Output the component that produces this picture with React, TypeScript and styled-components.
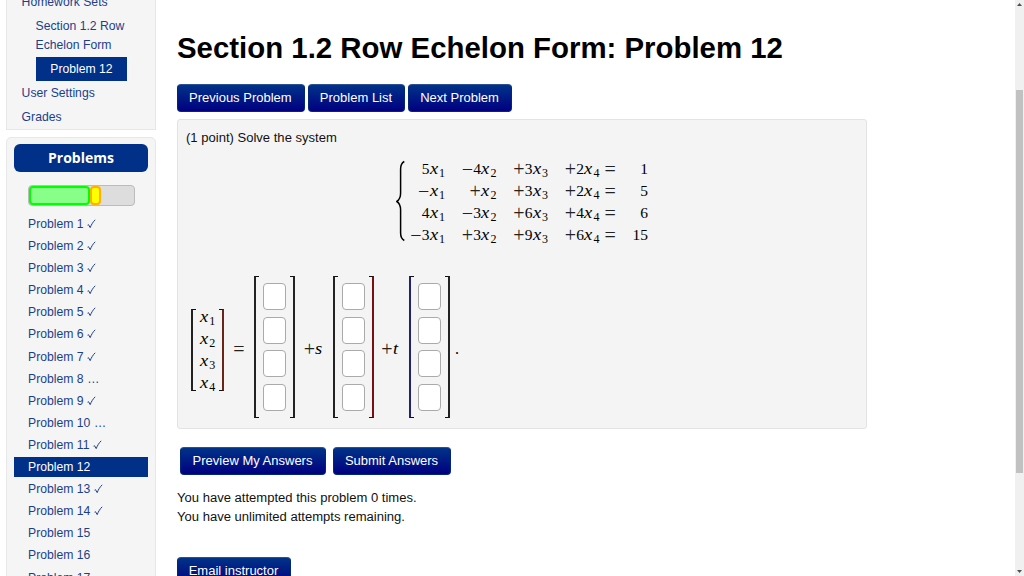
import styled, { createGlobalStyle } from "styled-components";
import { Fragment } from "react";

const GlobalStyle = createGlobalStyle`
    * {
        box-sizing: border-box;
    }
    body {
        margin: 0;
        background: #fff;
        color: #111;
        font-family: "Liberation Sans", Arial, sans-serif;
        font-size: 13px;
        overflow: hidden;
    }
`;

const Page = styled.div`
    display: flex;
    width: 1024px;
    height: 576px;
    overflow: hidden;
`;
const Sidebar = styled.aside`
    display: flex;
    flex-direction: column;
    flex-shrink: 0;
    width: 150px;
    margin-left: 6px;
    gap: 7px;
    font-size: 12.2px;
    color: #1b3f8b;
`;
const NavPanel = styled.nav`
    display: flex;
    flex-direction: column;
    justify-content: flex-end;
    flex-shrink: 0;
    height: 130px;
    padding-left: 14.6px;
    overflow: hidden;
    background: #f5f5f5;
    border: 1px solid #e6e6e6;
    border-top: none;
`;
const NavLink = styled.div`
    flex-shrink: 0;
    line-height: 24px;
`;
const NavSection = styled.div`
    flex-shrink: 0;
    margin: 3px 0 3px 14px;
    width: 100px;
    line-height: 18.5px;
`;
const NavCurrent = styled.div`
    flex-shrink: 0;
    width: 91px;
    height: 24px;
    margin-left: 14.4px;
    line-height: 24px;
    text-align: center;
    color: #fff;
    background: #003087;
`;

const ProblemPanel = styled.div`
    flex-shrink: 0;
    height: 460px;
    padding: 6px 7px;
    background: #f5f5f5;
    border: 1px solid #e8e8e8;
    border-radius: 5px;
`;
const ProblemHeading = styled.h2`
    width: 134px;
    height: 28px;
    margin: 0 0 13px;
    line-height: 27px;
    text-align: center;
    font-family: "Open Sans", sans-serif;
    font-size: 14px;
    font-weight: 700;
    color: #fff;
    background: #003087;
    border-radius: 6px;
`;
const Progress = styled.div`
    display: flex;
    width: 107px;
    height: 21px;
    margin: 0 0 8px 14px;
    background: #ddd;
    border: 1px solid #bbb;
    border-radius: 4px;
`;
const ProgressPart = styled.div<{ $width: number; $fill: string; $line: string }>`
    width: ${(p) => p.$width}px;
    background: ${(p) => p.$fill};
    border: 2px solid ${(p) => p.$line};
    border-radius: 4px;
`;
const ProblemItem = styled.div<{ $active?: boolean }>`
    display: flex;
    align-items: center;
    gap: 3.6px;
    width: 134px;
    height: 20px;
    margin-bottom: 2.1px;
    padding-left: 14px;
    color: ${(p) => (p.$active ? "#fff" : "#1b3f8b")};
    background: ${(p) => (p.$active ? "#003087" : "none")};
`;

const Main = styled.main`
    width: 690px;
    margin-left: 21px;
`;
const Title = styled.h1`
    margin: 30px 0 18px;
    height: 36px;
    line-height: 35px;
    font-size: 29.4px;
    font-weight: 700;
    color: #000;
    white-space: nowrap;
`;
const ButtonRow = styled.div<{ $gap: number; $indent?: number }>`
    display: flex;
    gap: ${(p) => p.$gap}px;
    padding-left: ${(p) => p.$indent || 0}px;
`;
const Button = styled.button<{ $width: number }>`
    width: ${(p) => p.$width}px;
    height: 28px;
    padding: 0 1px 1px 0;
    font-family: inherit;
    font-size: 13px;
    white-space: nowrap;
    color: #fff;
    background: linear-gradient(#003388, #000080);
    border: 1px solid #00287a;
    border-top-color: #2a4f93;
    border-radius: 4px;
`;
const ProblemBox = styled.section`
    height: 310px;
    margin: 7px 0 18px;
    padding: 8px 8px 9px;
    background: #f4f4f4;
    border: 1px solid #e3e3e3;
    border-radius: 3px;
`;
const Statement = styled.div`
    height: 20px;
    line-height: 19px;
    font-size: 13.05px;
`;

const System = styled.div`
    display: flex;
    width: 252px;
    margin: 10px 0 0 210px;
    font-family: "Liberation Serif", serif;
    font-size: 15.5px;
    color: #000;
`;
const Brace = styled.svg`
    display: block;
    flex-shrink: 0;
    margin-top: 1px;
`;
const Equations = styled.div`
    display: grid;
    grid-template-columns: 40px 51.5px 51.5px 51.5px 16.5px 32px;
    grid-auto-rows: 22px;
    height: 88px;
`;
const Cell = styled.div`
    display: flex;
    align-items: center;
    justify-content: flex-end;
`;
const Sign = styled.span`
    width: 11.5px;
    font-size: 20px;
    line-height: 22px;
    text-align: center;
    color: #222;
`;
const Variable = styled.i`
    display: inline-block;
    width: 9px;
    font-size: 16px;
    line-height: 20px;
    transform: scaleX(1.15);
    transform-origin: left;
`;
const Index = styled.span`
    width: 6px;
    margin-left: 0.5px;
    padding-top: 8px;
    font-size: 12px;
    line-height: 14px;
`;

const Answer = styled.div`
    display: flex;
    align-items: center;
    height: 142px;
    margin: 29px 0 0 5px;
    font-family: "Liberation Serif", serif;
    font-size: 16px;
    color: #000;
`;
const Matrix = styled.div<{ $width: number; $height: number; $top?: number }>`
    display: flex;
    justify-content: space-between;
    width: ${(p) => p.$width}px;
    height: ${(p) => p.$height}px;
    margin-top: ${(p) => p.$top || 0}px;
`;
const Bracket = styled.div<{ $side: "left" | "right"; $color?: string }>`
    width: 5px;
    border-top: 1.5px solid #111;
    border-bottom: 1.5px solid #111;
    border-${(p) => p.$side}: 2px solid ${(p) => p.$color || "#222"};
`;
const Entries = styled.div<{ $gap: number }>`
    display: flex;
    flex-direction: column;
    align-items: center;
    justify-content: center;
    gap: ${(p) => p.$gap}px;
    padding-top: 1px;
`;
const Entry = styled.div`
    display: flex;
    flex-shrink: 0;
    align-items: center;
    height: 22px;
`;
const Blank = styled.input`
    width: 23px;
    height: 27px;
    padding: 0;
    background: #fff;
    border: 1px solid #aaa;
    border-radius: 4px;
`;
const Joint = styled.div<{ $width: number }>`
    display: flex;
    align-items: center;
    justify-content: center;
    width: ${(p) => p.$width}px;
    padding-top: 6px;
`;
const Attempts = styled.p`
    margin: 13px 0 31px;
    line-height: 19px;
    font-size: 13.05px;
`;

const Scrollbar = styled.div`
    display: flex;
    flex-direction: column;
    align-items: center;
    justify-content: space-between;
    width: 9px;
    margin-left: auto;
    background: #f0f0f0;
`;
const Thumb = styled.div`
    width: 7px;
    height: 383px;
    margin-bottom: 13px;
    background: #c1c1c1;
`;
const Arrow = styled.svg`
    display: block;
    width: 5px;
    height: 3px;
    margin: 3px 0;
`;

interface Problem {
    id: number;
    status?: "done" | "partial";
}

const problems: Problem[] = [
    { id: 1, status: "done" },
    { id: 2, status: "done" },
    { id: 3, status: "done" },
    { id: 4, status: "done" },
    { id: 5, status: "done" },
    { id: 6, status: "done" },
    { id: 7, status: "done" },
    { id: 8, status: "partial" },
    { id: 9, status: "done" },
    { id: 10, status: "partial" },
    { id: 11, status: "done" },
    { id: 12 },
    { id: 13, status: "done" },
    { id: 14, status: "done" },
    { id: 15 },
    { id: 16 },
    { id: 17 },
];

// coefficients of x1..x4 and the right-hand side
const system = [
    ["5", "−4", "+3", "+2", "1"],
    ["−", "+", "+3", "+2", "5"],
    ["4", "−3", "+6", "+4", "6"],
    ["−3", "+3", "+9", "+6", "15"],
];

function Check() {
    return (
        <svg width="9" height="10" viewBox="0 0 9 10" fill="none">
            <path
                d="M0.6 6.2L1.5 5.7L3.2 8.6C4.3 5.8 6 2.8 8.2 0.8"
                stroke="#1b3f8b"
                strokeWidth="1"
            />
        </svg>
    );
}

function Term({ value, index }: { value: string; index: number }) {
    const signed = value[0] === "−" || value[0] === "+";
    return (
        <Cell>
            {signed && <Sign>{value[0]}</Sign>}
            <span>{signed ? value.slice(1) : value}</span>
            <Variable>x</Variable>
            <Index>{index}</Index>
        </Cell>
    );
}

function BlankVector({ left, right }: { left?: string; right?: string }) {
    return (
        <Matrix $width={41} $height={142} $top={1}>
            <Bracket $side="left" $color={left} />
            <Entries $gap={6.7}>
                {[1, 2, 3, 4].map((n) => (
                    <Blank key={n} />
                ))}
            </Entries>
            <Bracket $side="right" $color={right} />
        </Matrix>
    );
}

export default function App() {
    return (
        <>
            <GlobalStyle />
            <Page>
                <Sidebar>
                    <NavPanel>
                        <NavLink>Homework Sets</NavLink>
                        <NavSection>Section 1.2 Row Echelon Form</NavSection>
                        <NavCurrent>Problem 12</NavCurrent>
                        <NavLink>User Settings</NavLink>
                        <NavLink>Grades</NavLink>
                    </NavPanel>
                    <ProblemPanel>
                        <ProblemHeading>Problems</ProblemHeading>
                        <Progress>
                            <ProgressPart $width={61} $fill="#88ff88" $line="#00ff00" />
                            <ProgressPart $width={11} $fill="#ffff00" $line="#ffb000" />
                        </Progress>
                        {problems.map((item) => (
                            <ProblemItem key={item.id} $active={item.id === 12}>
                                <span>Problem {item.id}</span>
                                {item.status === "done" && <Check />}
                                {item.status === "partial" && <span>…</span>}
                            </ProblemItem>
                        ))}
                    </ProblemPanel>
                </Sidebar>
                <Main>
                    <Title>Section 1.2 Row Echelon Form: Problem 12</Title>
                    <ButtonRow $gap={3.3}>
                        <Button $width={127.7}>Previous Problem</Button>
                        <Button $width={97}>Problem List</Button>
                        <Button $width={103.5}>Next Problem</Button>
                    </ButtonRow>
                    <ProblemBox>
                        <Statement>(1 point) Solve the system</Statement>
                        <System>
                            <Brace width="9" height="84" viewBox="0 0 9 84" fill="none">
                                <path
                                    d="M8.3 2.5C5.5 4 4.6 6 4.6 10V34C4.6 38.5 3.4 40.8 0.8 42.5C3.4 44.2 4.6 46.5 4.6 51V74C4.6 78 5.5 80 8.3 81.5"
                                    stroke="#000"
                                    strokeWidth="1.5"
                                />
                            </Brace>
                            <Equations>
                                {system.map((row, idx) => (
                                    <Fragment key={idx}>
                                        {row.slice(0, 4).map((value, col) => (
                                            <Term key={col} value={value} index={col + 1} />
                                        ))}
                                        <Cell>
                                            <Sign>=</Sign>
                                        </Cell>
                                        <Cell>{row[4]}</Cell>
                                    </Fragment>
                                ))}
                            </Equations>
                        </System>
                        <Answer>
                            <Matrix $width={33} $height={82} $top={7}>
                                <Bracket $side="left" />
                                <Entries $gap={0}>
                                    {[1, 2, 3, 4].map((n) => (
                                        <Entry key={n}>
                                            <Variable>x</Variable>
                                            <Index>{n}</Index>
                                        </Entry>
                                    ))}
                                </Entries>
                                <Bracket $side="right" $color="#6b2418" />
                            </Matrix>
                            <Joint $width={30}>
                                <Sign>=</Sign>
                            </Joint>
                            <BlankVector />
                            <Joint $width={38}>
                                <Sign>+</Sign>
                                <Variable>s</Variable>
                            </Joint>
                            <BlankVector right="#7a1010" />
                            <Joint $width={35}>
                                <Sign>+</Sign>
                                <Variable>t</Variable>
                            </Joint>
                            <BlankVector left="#20207a" />
                            <Joint $width={14}>.</Joint>
                        </Answer>
                    </ProblemBox>
                    <ButtonRow $gap={7} $indent={3}>
                        <Button $width={146}>Preview My Answers</Button>
                        <Button $width={118}>Submit Answers</Button>
                    </ButtonRow>
                    <Attempts>
                        You have attempted this problem 0 times.
                        <br />
                        You have unlimited attempts remaining.
                    </Attempts>
                    <Button $width={114}>Email instructor</Button>
                </Main>
                <Scrollbar>
                    <Arrow viewBox="0 0 5 3">
                        <path d="M0 3L2.5 0L5 3Z" fill="#505050" />
                    </Arrow>
                    <Thumb />
                    <Arrow viewBox="0 0 5 3">
                        <path d="M0 0L2.5 3L5 0Z" fill="#505050" />
                    </Arrow>
                </Scrollbar>
            </Page>
        </>
    );
}
